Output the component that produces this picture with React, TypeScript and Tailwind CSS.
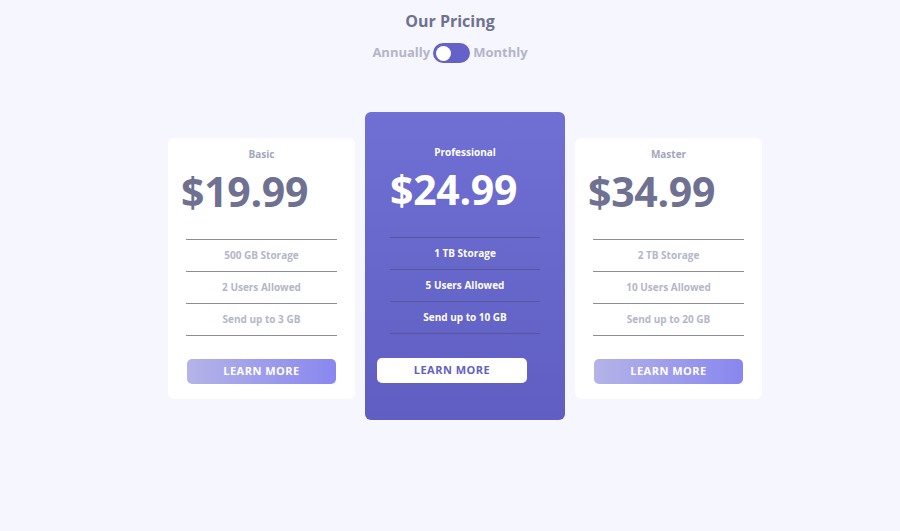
import React from "react";

const font = { fontFamily: '"Open Sans", "Liberation Sans", sans-serif' };

type Plan = {
  name: string;
  price: string;
  features: string[];
  featured?: boolean;
};

const plans: Plan[] = [
  { name: "Basic", price: "$19.99", features: ["500 GB Storage", "2 Users Allowed", "Send up to 3 GB"] },
  { name: "Professional", price: "$24.99", features: ["1 TB Storage", "5 Users Allowed", "Send up to 10 GB"], featured: true },
  { name: "Master", price: "$34.99", features: ["2 TB Storage", "10 Users Allowed", "Send up to 20 GB"] },
];

function Card({ plan }: { plan: Plan }) {
  if (plan.featured) {
    return (
      <div className="w-[200px] h-[308px] rounded-[6px] bg-gradient-to-b from-[#6f6fd4] to-[#605ec3] flex flex-col pt-[34px]">
        <div className="text-center text-[10px] font-bold text-white leading-[12px]">{plan.name}</div>
        <div className="pl-[25px] mt-[9px] text-[41px] font-bold text-white leading-[44px] tracking-[-0.3px]">{plan.price}</div>
        <div className="mx-[25px] mt-[26px] border-t-[1.5px] border-[#56569a]">
          {plan.features.map((f) => (
            <div key={f} className="h-[32px] flex items-center justify-center border-b-[1.5px] border-[#56569a] text-[10px] font-bold text-white">
              {f}
            </div>
          ))}
        </div>
        <button className="ml-[12px] mt-[24px] w-[150px] h-[25px] rounded-[5px] bg-white text-[#6360c5] text-[11px] font-bold tracking-[0.5px]">
          LEARN MORE
        </button>
      </div>
    );
  }
  return (
    <div className="mt-[26px] w-[187px] h-[261px] rounded-[6px] bg-white flex flex-col pt-[10px]">
      <div className="text-center text-[10px] font-bold text-[#a3a6bc] leading-[12px]">{plan.name}</div>
      <div className="pl-[13px] mt-[9px] text-[41px] font-bold text-[#6e7191] leading-[44px] tracking-[-0.3px]">{plan.price}</div>
      <div className="mx-[18px] mt-[26px] border-t-[1.5px] border-[#8e8e96]">
        {plan.features.map((f) => (
          <div key={f} className="h-[32px] flex items-center justify-center border-b-[1.5px] border-[#8e8e96] text-[10px] font-bold text-[#b4b6c9]">
            {f}
          </div>
        ))}
      </div>
      <button className="mx-[19px] mt-[23px] h-[25px] rounded-[5px] bg-gradient-to-r from-[#b5b3e8] to-[#8986ef] text-white text-[11px] font-bold tracking-[0.5px]">
        LEARN MORE
      </button>
    </div>
  );
}

export default function App() {
  return (
    <div className="w-[900px] h-[531px] bg-[#f6f6fe] flex flex-col items-center" style={font}>
      <h1 className="mt-[11px] text-[16px] font-bold text-[#6e728e] leading-[20px]">Our Pricing</h1>
      <div className="mt-[12px] flex items-center gap-[3px]">
        <span className="text-[13px] font-bold text-[#b3b4c8]">Annually</span>
        <div className="w-[37px] h-[20px] rounded-full bg-[#6462c8] flex items-center pl-[3px]">
          <div className="w-[15px] h-[15px] rounded-full bg-white" />
        </div>
        <span className="text-[13px] font-bold text-[#b3b4c8]">Monthly</span>
      </div>
      <div className="mt-[49px] ml-[30px] flex items-start gap-[10px]">
        {plans.map((p) => (
          <Card key={p.name} plan={p} />
        ))}
      </div>
    </div>
  );
}
